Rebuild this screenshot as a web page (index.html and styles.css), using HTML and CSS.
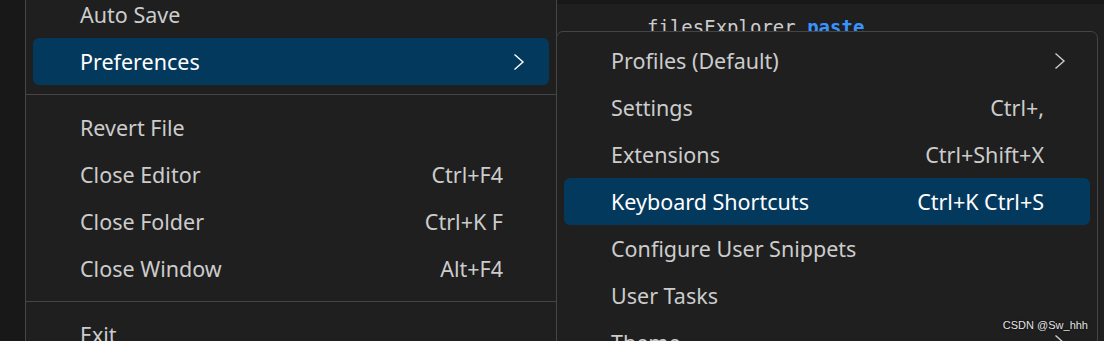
FILE: index.html
```html
<!DOCTYPE html>
<html lang="en">
<head>
    <meta charset="utf-8" />
    <title>File menu - Preferences</title>
    <link rel="stylesheet" href="styles.css">
</head>
<body>
    <div class="workbench">
        <div class="sidebar"></div>

        <div class="menu">
            <div class="menu-item"><span class="label">Auto Save</span></div>
            <div class="menu-item active">
                <span class="label">Preferences</span>
                <svg class="chevron" viewBox="0 0 12 18"><polyline points="1.5,1.5 10,9 1.5,16.5" /></svg>
            </div>
            <div class="separator"></div>
            <div class="menu-item"><span class="label">Revert File</span></div>
            <div class="menu-item"><span class="label">Close Editor</span><span class="keys">Ctrl+F4</span></div>
            <div class="menu-item"><span class="label">Close Folder</span><span class="keys">Ctrl+K F</span></div>
            <div class="menu-item"><span class="label">Close Window</span><span class="keys">Alt+F4</span></div>
            <div class="separator"></div>
            <div class="menu-item"><span class="label">Exit</span></div>
        </div>

        <div class="editor">
            <div class="code-line">filesExplorer.<span class="token">paste</span></div>
        </div>

        <div class="menu submenu">
            <div class="menu-item">
                <span class="label">Profiles (Default)</span>
                <svg class="chevron" viewBox="0 0 12 18"><polyline points="1.5,1.5 10,9 1.5,16.5" /></svg>
            </div>
            <div class="menu-item"><span class="label">Settings</span><span class="keys">Ctrl+,</span></div>
            <div class="menu-item"><span class="label">Extensions</span><span class="keys">Ctrl+Shift+X</span></div>
            <div class="menu-item active"><span class="label">Keyboard Shortcuts</span><span class="keys">Ctrl+K Ctrl+S</span></div>
            <div class="menu-item"><span class="label">Configure User Snippets</span></div>
            <div class="menu-item"><span class="label">User Tasks</span></div>
            <div class="menu-item">
                <span class="label">Theme</span>
                <svg class="chevron" viewBox="0 0 12 18"><polyline points="1.5,1.5 10,9 1.5,16.5" /></svg>
            </div>
        </div>

        <div class="watermark">CSDN @Sw_hhh</div>
    </div>
</body>
</html>
```

FILE: styles.css
```css
* {
    margin: 0;
    padding: 0;
    box-sizing: border-box;
}

body {
    background: #1f1f1f;
    font-family: "Noto Sans", "Open Sans", sans-serif;
    color: #cccccc;
}

.workbench {
    position: relative;
    display: flex;
    height: 341px;
    overflow: hidden;
}

.sidebar {
    width: 25px;
    flex-shrink: 0;
    background: #181818;
}

.menu {
    width: 532px;
    flex-shrink: 0;
    margin-top: -9px;
    padding: 0 7px;
    background: #1f1f1f;
    border-left: 1px solid #454545;
    border-right: 1px solid #454545;
}

.menu-item {
    display: flex;
    align-items: center;
    height: 47px;
    padding: 0 46px 0 47px;
    border-radius: 6px;
    font-size: 21.5px;
    white-space: nowrap;
}

.menu-item .label {
    flex: 1;
}

.menu-item.active {
    background: #04395e;
    color: #ffffff;
}

.chevron {
    width: 12px;
    height: 18px;
    margin-right: -22px;
    fill: none;
    stroke: currentColor;
    stroke-width: 1.4;
}

.separator {
    height: 19px;
    padding-top: 9px;
}

.separator::before {
    content: "";
    display: block;
    height: 1px;
    margin: 0 -7px;
    background: #454545;
}

.editor {
    flex: 1;
    border-top: 4px solid #181818;
}

.code-line {
    margin: 10px 0 0 90px;
    font-family: "DejaVu Sans Mono", monospace;
    font-size: 19px;
    line-height: 26px;
    color: #cccccc;
    white-space: nowrap;
}

.code-line .token {
    color: #3794ff;
    font-weight: bold;
}

.submenu {
    position: absolute;
    top: 31px;
    left: 556px;
    width: 542px;
    height: 340px;
    margin-top: 0;
    padding-top: 5px;
    border: 1px solid #454545;
    border-radius: 7px;
}

.watermark {
    position: absolute;
    right: 16px;
    bottom: 10px;
    font-family: "Liberation Sans", Arial, sans-serif;
    font-size: 11px;
    color: #e4e4e4;
    text-shadow: 0 0 2px #000;
}
```
